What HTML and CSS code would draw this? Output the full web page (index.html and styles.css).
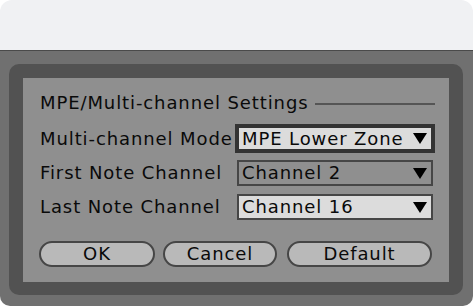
FILE: index.html
```html
<!DOCTYPE html>
<html lang="en">
<head>
  <meta charset="UTF-8">
  <title>MPE/Multi-channel Settings</title>
  <link rel="stylesheet" href="styles.css">
</head>
<body>
  <div class="titlebar"></div>

  <div class="outer">
    <div class="frame">
      <div class="panel">
        <!-- Group header -->
        <div class="group-title">
          <span>MPE/Multi-channel Settings</span>
          <div class="rule"></div>
        </div>

        <!-- Settings rows -->
        <div class="rows">
          <div class="label">Multi-channel Mode</div>
          <div class="dropdown focused">
            <span>MPE Lower Zone</span>
            <span class="arrow"></span>
          </div>

          <div class="label">First Note Channel</div>
          <div class="dropdown dim">
            <span>Channel 2</span>
            <span class="arrow"></span>
          </div>

          <div class="label">Last Note Channel</div>
          <div class="dropdown">
            <span>Channel 16</span>
            <span class="arrow"></span>
          </div>
        </div>

        <!-- Buttons -->
        <div class="buttons">
          <button class="btn ok">OK</button>
          <button class="btn cancel">Cancel</button>
          <button class="btn default">Default</button>
        </div>
      </div>
    </div>
  </div>
</body>
</html>
```

FILE: styles.css
```css
* {
  margin: 0;
  padding: 0;
  box-sizing: border-box;
}

body {
  width: 473px;
  height: 306px;
  background: #fff;
  font-family: 'DejaVu Sans', sans-serif;
  font-size: 18px;
  letter-spacing: 0.9px;
  color: #0a0a0a;
  overflow: hidden;
}

/* Window title bar */
.titlebar {
  height: 51px;
  background: #f0f1f3;
  border-radius: 12px 12px 0 0;
  border-bottom: 1px solid #4a4a4a;
}

/* Outer grey body */
.outer {
  height: 255px;
  background: #707070;
  border-radius: 0 0 10px 10px;
  padding: 13px 10px 11px 9px;
}

.frame {
  height: 231px;
  background: #525252;
  border-radius: 10px;
  padding: 14px 14px 13px 14px;
}

.panel {
  height: 204px;
  background: #8f8f8f;
  padding: 15px 14px 0 17px;
}

/* Group header */
.group-title {
  display: flex;
  align-items: center;
  height: 20px;
  line-height: 20px;
}

.rule {
  flex: 1;
  height: 2px;
  background: #555;
  margin-left: 6px;
  margin-top: 2px;
}

/* Rows */
.rows {
  display: grid;
  grid-template-columns: 197px 196px;
  row-gap: 8px;
  margin-top: 13px;
}

.label {
  height: 26px;
  line-height: 26px;
  white-space: nowrap;
}

.dropdown {
  height: 26px;
  border: 2px solid #464646;
  background: #dcdcdc;
  display: flex;
  justify-content: space-between;
  align-items: center;
  padding: 0 4px 0 3px;
  line-height: 22px;
}

.dropdown.focused {
  height: 25px;
  border-color: #333;
  box-shadow: 0 0 0 2px #333;
}

.dropdown.dim {
  background: #8f8f8f;
}

.arrow {
  width: 0;
  height: 0;
  border-left: 7px solid transparent;
  border-right: 7px solid transparent;
  border-top: 11px solid #000;
}

/* Buttons */
.buttons {
  display: flex;
  margin-top: 21px;
  margin-left: -1px;
}

.btn {
  height: 26px;
  border: 2px solid #464646;
  border-radius: 13px;
  background: #b9b9b9;
  font-family: inherit;
  font-size: 18px;
  letter-spacing: 0.9px;
  color: #0a0a0a;
  line-height: 22px;
}

.ok {
  width: 116px;
}

.cancel {
  width: 114px;
  margin-left: 8px;
}

.default {
  width: 145px;
  margin-left: 10px;
}
```
